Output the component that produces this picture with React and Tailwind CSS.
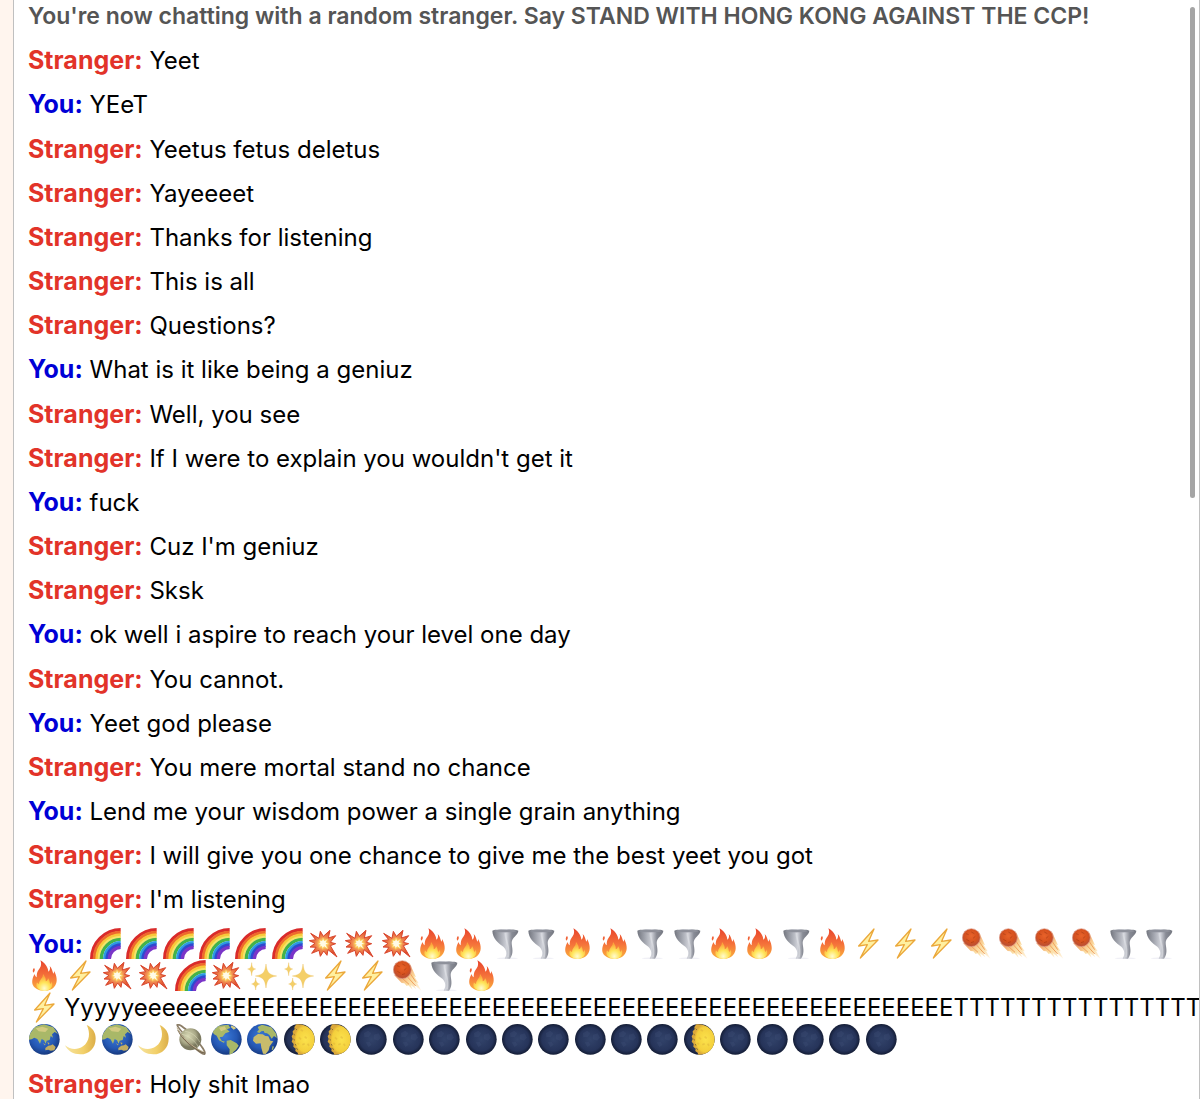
import React from "react";

const messages = [
  { from: "stranger", text: "Yeet" },
  { from: "you", text: "YEeT" },
  { from: "stranger", text: "Yeetus fetus deletus" },
  { from: "stranger", text: "Yayeeeet" },
  { from: "stranger", text: "Thanks for listening" },
  { from: "stranger", text: "This is all" },
  { from: "stranger", text: "Questions?" },
  { from: "you", text: "What is it like being a geniuz" },
  { from: "stranger", text: "Well, you see" },
  { from: "stranger", text: "If I were to explain you wouldn't get it" },
  { from: "you", text: "fuck" },
  { from: "stranger", text: "Cuz I'm geniuz" },
  { from: "stranger", text: "Sksk" },
  { from: "you", text: "ok well i aspire to reach your level one day" },
  { from: "stranger", text: "You cannot." },
  { from: "you", text: "Yeet god please" },
  { from: "stranger", text: "You mere mortal stand no chance" },
  { from: "you", text: "Lend me your wisdom power a single grain anything" },
  {
    from: "stranger",
    text: "I will give you one chance to give me the best yeet you got",
  },
  { from: "stranger", text: "I'm listening" },
];

const repeat = (name, count) => Array(count).fill(name);

const firstRow = [
  ...repeat("rainbow", 6),
  ...repeat("boom", 3),
  ...repeat("fire", 2),
  ...repeat("tornado", 2),
  ...repeat("fire", 2),
  ...repeat("tornado", 2),
  ...repeat("fire", 2),
  "tornado",
  "fire",
  ...repeat("zap", 3),
  ...repeat("comet", 4),
  ...repeat("tornado", 2),
];

const secondRow = [
  "fire",
  "zap",
  "boom",
  "boom",
  "rainbow",
  "boom",
  "sparkles",
  "sparkles",
  "zap",
  "zap",
  "comet",
  "tornado",
  "fire",
];

const planetRow = [
  "asia",
  "crescent",
  "asia",
  "crescent",
  "saturn",
  "americas",
  "africa",
  "gibbous",
  "gibbous",
  ...repeat("newmoon", 9),
  "gibbous",
  ...repeat("newmoon", 5),
];

const rainbowBands = [
  ["#d92b2b", 88],
  ["#ee6a2c", 80],
  ["#f8c93a", 72],
  ["#f4e36a", 65],
  ["#43b34a", 59],
  ["#2b9be0", 49],
  ["#2f49d0", 42],
  ["#7a35c8", 35],
];

const EmojiSprites = () => (
  <svg className="absolute h-0 w-0" aria-hidden="true">
    <defs>
      <linearGradient id="fireFill" x1="0" y1="0" x2="0" y2="1">
        <stop offset="0" stopColor="#e8442c" />
        <stop offset="0.5" stopColor="#f4703a" />
        <stop offset="1" stopColor="#fbb23c" />
      </linearGradient>
      <radialGradient id="fireCore" cx="0.5" cy="0.85" r="0.7">
        <stop offset="0" stopColor="#fffbd0" />
        <stop offset="0.5" stopColor="#ffe55a" />
        <stop offset="1" stopColor="#fba63c" />
      </radialGradient>
      <radialGradient id="boomFill">
        <stop offset="0" stopColor="#fffbe0" />
        <stop offset="0.25" stopColor="#fbcf60" />
        <stop offset="0.5" stopColor="#f08a50" />
        <stop offset="1" stopColor="#dd4a2c" />
      </radialGradient>
      <linearGradient id="tornadoFill">
        <stop offset="0" stopColor="#72757e" />
        <stop offset="0.3" stopColor="#a4a7b0" />
        <stop offset="0.55" stopColor="#d0d2d9" />
        <stop offset="0.75" stopColor="#888b95" />
        <stop offset="1" stopColor="#747780" />
      </linearGradient>
      <radialGradient id="cometHead" cx="0.5" cy="0.4">
        <stop offset="0" stopColor="#e8622a" />
        <stop offset="0.7" stopColor="#d6511e" />
        <stop offset="1" stopColor="#bf5030" />
      </radialGradient>
      <linearGradient id="cometTail" x1="0" y1="0" x2="1" y2="1">
        <stop offset="0.2" stopColor="#ee8a50" />
        <stop offset="0.6" stopColor="#fbdca0" />
        <stop offset="1" stopColor="#fff4e4" />
      </linearGradient>
      <radialGradient id="sea" cx="0.45" cy="0.4" r="0.6">
        <stop offset="0" stopColor="#3a7ad8" />
        <stop offset="0.65" stopColor="#2558b4" />
        <stop offset="1" stopColor="#173a80" />
      </radialGradient>
      <linearGradient id="crescentFill">
        <stop offset="0" stopColor="#f6e4a0" />
        <stop offset="0.6" stopColor="#f2d06a" />
        <stop offset="1" stopColor="#dcae48" />
      </linearGradient>
      <radialGradient id="saturnFill" cx="0.4" cy="0.35">
        <stop offset="0" stopColor="#d8d8b4" />
        <stop offset="0.7" stopColor="#aaa988" />
        <stop offset="1" stopColor="#7c7a60" />
      </radialGradient>
      <radialGradient id="darkMoon">
        <stop offset="0" stopColor="#32436a" />
        <stop offset="0.75" stopColor="#26345a" />
        <stop offset="1" stopColor="#141d36" />
      </radialGradient>
      <radialGradient id="litMoon" cx="0.6" cy="0.5">
        <stop offset="0" stopColor="#fbe24c" />
        <stop offset="0.8" stopColor="#f4cf3c" />
        <stop offset="1" stopColor="#dba83a" />
      </radialGradient>
      <clipPath id="rainbowClip">
        <rect width="92" height="93" />
      </clipPath>
      <clipPath id="globe">
        <circle cx="46" cy="46" r="46" />
      </clipPath>
    </defs>

    <symbol id="rainbow" viewBox="0 0 93 93">
      <g clipPath="url(#rainbowClip)" fill="none" strokeWidth="10">
        {rainbowBands.map(([color, radius]) => (
          <circle key={color} cx="93" cy="93" r={radius} stroke={color} />
        ))}
      </g>
    </symbol>

    <symbol id="boom" viewBox="0 0 93 93">
      <path
        d="M8 16l25 15 4-21 9 15L66 7l-5 23 22-7-16 20 16 4-16 6 20 34-27-22-3 17-10-13-10 16-4-18-22 9 13-18-18-1 15-11-17-8 19-3z"
        fill="url(#boomFill)"
        stroke="#d9452c"
        strokeWidth="3"
      />
      <path
        d="M34 36l8 2 3-9 4 9 10-5-5 10 9 4-9 3 6 13-12-7-4 8-3-9-8 3 4-8-7-3 6-3z"
        fill="#fffbe6"
        stroke="#fbc850"
        strokeWidth="2"
      />
    </symbol>

    <symbol id="fire" viewBox="0 0 93 93">
      <path
        d="M34 1c14 8 23 20 24 34 6-4 6-11 4-17 7 7 8 16 11 23 2-3 3-6 2-9 9 17 11 32 4 44C73 87 60 93 47 93S18 88 12 76c-5-11-1-25 5-34 1 5 3 8 6 10 0-14 3-19 9-27 6-8 5-17 2-24zM15 24c4 4 3 9-2 14-3-5-2-10 2-14z"
        fill="url(#fireFill)"
      />
      <path
        d="M42 42c7 9 9 15 8 22 5-2 7-6 7-10 6 7 4 14 7 18 3-2 4-5 4-8 4 12 1 21-8 25-8 5-22 5-30-1-8-5-10-12-6-21 2 3 4 4 6 5 0-13 12-16 12-30z"
        fill="url(#fireCore)"
      />
    </symbol>

    <symbol id="tornado" viewBox="0 0 93 93">
      <ellipse cx="52" cy="91" rx="32" ry="3" fill="#f0f0f6" />
      <path
        d="M7 8C14 2 78 2 85 8c0 13-20 20-20 36 0 12 8 30-5 48H44c8-14 6-26-4-36C24 44 8 32 7 8z"
        fill="url(#tornadoFill)"
      />
      <path
        d="M46 14c-2 22 16 38 8 74"
        fill="none"
        stroke="#e6e7ec"
        strokeWidth="5"
        opacity="0.5"
      />
      <ellipse cx="46" cy="9" rx="34" ry="4" fill="#8e919b" />
    </symbol>

    <symbol id="zap" viewBox="0 0 93 93">
      <path
        d="M63 3L17 54l26-4L22 90l53-54-28 4z"
        fill="#fff0a0"
        stroke="#eba83a"
        strokeWidth="4"
        strokeLinejoin="round"
      />
    </symbol>

    <symbol id="comet" viewBox="0 0 93 93">
      <path
        d="M4 46l22 23 8 1 7 8 5-2 13 13-6-14 17 13-9-16 24 20-13-24 5 2-14-21 6 3-18-40z"
        fill="url(#cometTail)"
      />
      <path
        d="M28 55l20 18M41 48l27 30M50 38l18 27"
        stroke="#f0a05c"
        strokeWidth="3"
      />
      <circle cx="28" cy="29" r="27" fill="url(#cometHead)" stroke="#dfa090" strokeWidth="2" />
      <path
        d="M12 17l8 3M28 12l9 5M13 34l9 5M33 31l7-6M27 44l9-3"
        stroke="#9c3614"
        strokeWidth="3"
        opacity="0.5"
      />
    </symbol>

    <symbol id="sparkles" viewBox="0 0 93 93">
      <g fill="#f4cf68" stroke="#eab850" strokeWidth="1">
        <path d="M57 12c3 24 7 32 32 36-25 4-29 12-32 36-3-24-7-32-32-36 25-4 29-12 32-36z" />
        <path d="M14 8c1 14 4 17 12 19-8 2-11 6-12 20-1-14-4-18-12-20 8-2 11-5 12-19z" />
        <path d="M26 54c1 12 4 16 12 18-8 2-11 6-12 18-1-12-4-16-12-18 8-2 11-6 12-18z" />
      </g>
    </symbol>

    <symbol id="asia" viewBox="0 0 93 93">
      <circle cx="46" cy="46" r="46" fill="url(#sea)" />
      <g clipPath="url(#globe)" fill="#a9b868">
        <path d="M2 30L18 8 45 1l28 9 14 20-10-6-8 7 3 10-7-5-3 12-9 2-3 9-5-10-7-4-5 14-8-14-9-4-8 5-12 2z" />
        <path d="M49 72l9-7 8-1 5-3 9 8-4 10-11 1-7-3-9 2zM42 57l8 5-3 2zM55 55l7 2-4 5z" fill="#c2ad62" />
        <path d="M20 13l20-5 18 6-9 10-20-2z" fill="#d3cb82" />
      </g>
    </symbol>

    <symbol id="americas" viewBox="0 0 93 93">
      <circle cx="46" cy="46" r="46" fill="url(#sea)" />
      <g clipPath="url(#globe)" fill="#a9b868">
        <path d="M5 22L22 5l30-3 6 10-10 4 8 7-13 5-8 10-9 2 6 10 10 3-4 3-14-7-7-14-9-5z" />
        <path d="M47 50l12-2 18 10 6 7-8 12-8 7-5 9-7-1 1-16-9-12z" />
        <path d="M62 4l14 8-8 5-9-8zM24 11l17-4 5 9-16 6z" fill="#d3cb82" />
      </g>
    </symbol>

    <symbol id="africa" viewBox="0 0 93 93">
      <circle cx="46" cy="46" r="46" fill="url(#sea)" />
      <g clipPath="url(#globe)" fill="#a9b868">
        <path d="M32 9l13-7 28 8 15 20 1 12-8-6-7 8-7-11-7-5-7-1-3-6-7 1-6 5-7-3 6-7z" />
        <path d="M20 39l13-9 14 1 8 5 9 1 6 13 9 2-11 15-3 12-9 11-8-1-5-18-2-13-14 1-9-9z" fill="#c8bc6c" />
        <path d="M77 66l4 2-4 10-3-1z" />
      </g>
    </symbol>

    <symbol id="crescent" viewBox="0 0 93 93">
      <path
        d="M65 3c18 8 27 23 27 41 0 28-20 47-46 47C25 91 8 81 0 64c15 13 37 15 54 3C74 53 77 26 65 3z"
        fill="url(#crescentFill)"
      />
    </symbol>

    <symbol id="saturn" viewBox="0 0 93 93">
      <path
        d="M22 25C8 8 4 2 8 2c9-1 34 21 56 46 18 20 29 38 25 42-4 3-18-7-33-21"
        fill="none"
        stroke="#8c7e68"
        strokeWidth="5"
      />
      <circle cx="46" cy="46" r="33" fill="url(#saturnFill)" />
      <path d="M20 31c17 1 42 21 50 38M30 22c19 2 37 17 44 32" fill="none" stroke="#e0dfc0" strokeWidth="3" opacity="0.5" />
      <path
        d="M9 18c9 18 28 38 47 51 17 12 29 20 33 18"
        fill="none"
        stroke="#75664f"
        strokeWidth="5"
      />
      <path
        d="M6 11c9 20 28 41 48 55 16 11 28 18 33 16"
        fill="none"
        stroke="#c2b594"
        strokeWidth="3"
      />
    </symbol>

    <symbol id="gibbous" viewBox="0 0 93 93">
      <circle cx="46" cy="46" r="46" fill="url(#darkMoon)" />
      <path
        d="M37 1l-6 8 1 7-6 6 1 9-4 6 3 8-3 8 6 7-1 8 7 6-1 7 7 5 2 6c28 2 49-19 49-46S67-2 37 1z"
        fill="url(#litMoon)"
      />
      <path d="M50 17l7 4M62 38l6 5M45 40l6 6M55 62l7-3M71 59l4 6M40 57l5 4" stroke="#dfb43c" strokeWidth="5" opacity="0.5" />
      <path d="M29 29l3 5M28 45l5 4M34 60l2 5M37 73l5 4M35 14l4 4" stroke="#8a7434" strokeWidth="3" />
    </symbol>

    <symbol id="newmoon" viewBox="0 0 93 93">
      <circle cx="46" cy="46" r="46" fill="url(#darkMoon)" />
      <path d="M24 27l13-7 9 8-8 11-13 1zM54 32l14-4 7 13-9 9-13-4zM29 55l12-1 6 9-10 6z" fill="#43547a" opacity="0.3" />
    </symbol>
  </svg>
);

const Emoji = ({ name }) => (
  <span className="flex h-8 flex-1 items-center">
    <svg className="h-[31px] w-[31px] shrink-0" role="img" aria-label={name}>
      <use href={`#${name}`} />
    </svg>
  </span>
);

const EmojiRow = ({ names, className }) => (
  <span className={`flex shrink-0 pl-px ${className}`}>
    {names.map((name, index) => (
      <Emoji key={index} name={name} />
    ))}
  </span>
);

const Sender = ({ from }) =>
  from === "you" ? (
    <strong className="text-[25px] font-bold text-[#0000d6]">You:</strong>
  ) : (
    <strong className="text-[25px] font-bold text-[#e23329]">Stranger:</strong>
  );

const Message = ({ from, children }) => (
  <p className="h-8">
    <Sender from={from} /> {children}
  </p>
);

const App = () => {
  return (
    <div className="flex h-screen overflow-hidden bg-[#fff5ee] pl-[13px] font-['Inter',sans-serif] text-[24px] leading-8 text-black">
      <EmojiSprites />
      <main className="relative -mb-px flex min-w-0 flex-1 flex-col justify-between overflow-hidden border-x border-[#c0c0c0] bg-white pl-[14px] whitespace-nowrap">
        <p className="text-[23px] leading-8 font-semibold text-[#555555]">
          You're now chatting with a random stranger. Say STAND WITH HONG KONG
          AGAINST THE CCP!
        </p>

        {messages.map((message, index) => (
          <Message key={index} from={message.from}>
            {message.text}
          </Message>
        ))}

        <div>
          <div className="flex gap-1.5">
            <Sender from="you" />
            <EmojiRow names={firstRow} className="w-[1092px]" />
          </div>
          <EmojiRow names={secondRow} className="w-[474px]" />
          <div className="flex">
            <EmojiRow names={["zap"]} className="w-9" />
            <span>
              Yyyyyeeeeee{"E".repeat(51)}
              {"T".repeat(17)}
            </span>
          </div>
          <EmojiRow names={planetRow} className="w-[874px]" />
        </div>

        <Message from="stranger">Holy shit lmao</Message>

        <div className="absolute top-[7px] right-1 h-[491px] w-[5px] rounded-full bg-[#a5a5a5]" />
      </main>
    </div>
  );
};

export default App;
